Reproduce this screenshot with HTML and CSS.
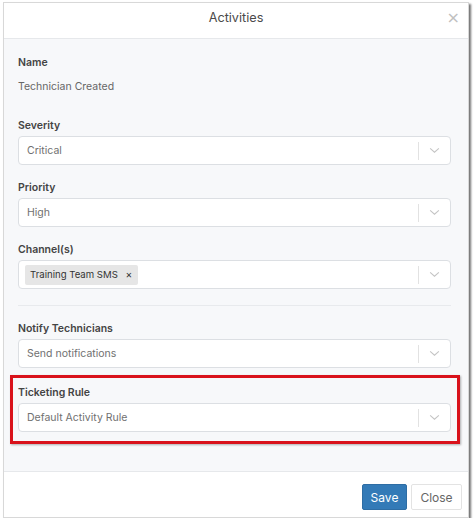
FILE: index.html
```html
<!DOCTYPE html>
<html>
<head>
<meta charset="utf-8">
<link rel="stylesheet" href="styles.css">
</head>
<body>
<div class="modal">
  <div class="modal-header">
    <span class="title">Activities</span>
    <span class="close-x">&times;</span>
  </div>
  <div class="modal-body">
    <div class="group-name">
      <div class="label">Name</div>
      <div class="value">Technician Created</div>
    </div>
    <div class="group">
      <div class="label">Severity</div>
      <div class="select"><span class="sel-text">Critical</span><span class="sep"></span><svg class="chev" viewBox="0 0 12 8" width="11" height="7"><path d="M1 1.5 L6 6 L11 1.5" fill="none" stroke="#c4c4c4" stroke-width="1.2"/></svg></div>
    </div>
    <div class="group">
      <div class="label">Priority</div>
      <div class="select"><span class="sel-text">High</span><span class="sep"></span><svg class="chev" viewBox="0 0 12 8" width="11" height="7"><path d="M1 1.5 L6 6 L11 1.5" fill="none" stroke="#c4c4c4" stroke-width="1.2"/></svg></div>
    </div>
    <div class="group">
      <div class="label">Channel(s)</div>
      <div class="select"><span class="tag">Training Team SMS <span class="tag-x">&#x2715;</span></span><span class="sep"></span><svg class="chev" viewBox="0 0 12 8" width="11" height="7"><path d="M1 1.5 L6 6 L11 1.5" fill="none" stroke="#c4c4c4" stroke-width="1.2"/></svg></div>
    </div>
    <hr class="divider">
    <div class="group notify">
      <div class="label">Notify Technicians</div>
      <div class="select"><span class="sel-text">Send notifications</span><span class="sep"></span><svg class="chev" viewBox="0 0 12 8" width="11" height="7"><path d="M1 1.5 L6 6 L11 1.5" fill="none" stroke="#c4c4c4" stroke-width="1.2"/></svg></div>
    </div>
    <div class="highlight">
      <div class="label">Ticketing Rule</div>
      <div class="select"><span class="sel-text">Default Activity Rule</span><span class="sep"></span><svg class="chev" viewBox="0 0 12 8" width="11" height="7"><path d="M1 1.5 L6 6 L11 1.5" fill="none" stroke="#c4c4c4" stroke-width="1.2"/></svg></div>
    </div>
  </div>
  <div class="modal-footer">
    <button class="btn btn-save">Save</button>
    <button class="btn btn-close">Close</button>
  </div>
</div>
</body>
</html>
```
FILE: styles.css
```css
html, body {
  margin: 0;
  padding: 0;
  background: #ffffff;
}
* {
  box-sizing: border-box;
}
body {
  font-family: Inter, "Noto Sans", sans-serif;
  font-size: 10.5px;
  color: #555;
}
.modal {
  margin: 2px 0 0 3px;
  width: 466px;
  height: 516px;
  border: 1px solid #d8d8d8;
  background: #fff;
  box-shadow: 2px 2px 2px rgba(0,0,0,0.55);
  display: flex;
  flex-direction: column;
}
.modal-header {
  height: 36px;
  flex: none;
  border-bottom: 1px solid #e6e8eb;
  text-align: center;
  padding-top: 7px;
  position: relative;
}
.title {
  font-size: 12.7px;
  color: #4a4a4a;
  line-height: 16px;
}
.close-x {
  position: absolute;
  right: 8px;
  top: 6px;
  font-size: 16px;
  line-height: 18px;
  color: #c0c0c0;
  font-family: "DejaVu Sans", sans-serif;
}
.modal-body {
  flex: 1;
  background: #f7f8fa;
  padding: 16px 17px 0 14px;
}
.label {
  font-weight: 600;
  color: #444;
  line-height: 15px;
  height: 14px;
}
.value {
  margin-top: 11px;
  line-height: 14px;
  color: #666;
}
.group {
  margin-top: 24px;
}
.group + .group {
  margin-top: 15px;
}
.group .label, .highlight .label {
  margin-bottom: 4px;
}
.select {
  height: 29px;
  border: 1px solid #dcdfe3;
  border-radius: 4px;
  background: #fff;
  display: flex;
  align-items: center;
  padding-left: 8px;
}
.sel-text {
  flex: 1;
  color: #707070;
}
.tag {
  background: #e6e6e6;
  border-radius: 2px;
  color: #333;
  font-size: 9.6px;
  padding: 3px 6px 3px 5px;
  line-height: 13px;
  margin-left: -2px;
}
.tag-x {
  font-size: 8px;
  font-weight: 700;
  margin-left: 5px;
  font-family: "DejaVu Sans", sans-serif;
}
.select .tag + .sep {
  margin-left: auto;
}
.sep {
  width: 1px;
  height: 18px;
  background: #e2e2e2;
}
.chev {
  margin: 0 10px 0 10px;
}
.divider {
  border: 0;
  border-top: 1px solid #e8eaed;
  margin: 16px 0 0 0;
}
.notify {
  margin-top: 15px;
}
.highlight {
  margin: 7px -9px 0 -8px;
  border: 3px solid #d9121b;
  padding: 7px 6px 9px 5px;
  box-shadow: 1px 1px 2px rgba(0,0,0,0.3);
}
.modal-footer {
  height: 46px;
  flex: none;
  border-top: 1px solid #e6e8eb;
  display: flex;
  justify-content: flex-end;
  align-items: flex-start;
  padding: 12px 6px 0 0;
  gap: 4px;
}
.btn {
  height: 26px;
  font-family: Inter, "Noto Sans", sans-serif;
  font-size: 12px;
  border-radius: 2px;
  padding: 0;
  cursor: pointer;
}
.btn-save {
  width: 45px;
  background: #337ab7;
  border: 1px solid #2e6da4;
  color: #fff;
}
.btn-close {
  width: 51px;
  background: #fff;
  border: 1px solid #e3e3e3;
  color: #666;
}
```
